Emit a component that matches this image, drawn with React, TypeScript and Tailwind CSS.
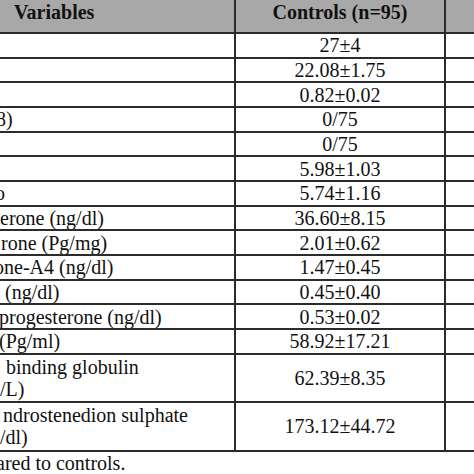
import React from "react";

type Row = { label?: string; cls?: string; v: string };

const rows: Row[] = [
  { v: "27±4" },
  { v: "22.08±1.75" },
  { v: "0.82±0.02" },
  { label: "8)", cls: "-ml-[4px]", v: "0/75" },
  { v: "0/75" },
  { v: "5.98±1.03" },
  { label: "o", cls: "-ml-[5px]", v: "5.74±1.16" },
  { label: "erone (ng/dl)", cls: "ml-0", v: "36.60±8.15" },
  { label: "rone (Pg/mg)", cls: "ml-[1px]", v: "2.01±0.62" },
  { label: "one-A4 (ng/dl)", cls: "-ml-[6px]", v: "1.47±0.45" },
  { label: "(ng/dl)", cls: "ml-[5px]", v: "0.45±0.40" },
  { label: "progesterone (ng/dl)", cls: "-ml-[1px]", v: "0.53±0.02" },
  { label: "(Pg/ml)", cls: "-ml-[1px]", v: "58.92±17.21" },
];

type Tall = { lines: { t: string; cls: string }[]; v: string };

const tall: Tall[] = [
  {
    lines: [
      { t: "binding globulin", cls: "ml-[6px]" },
      { t: "/L)", cls: "ml-0" },
    ],
    v: "62.39±8.35",
  },
  {
    lines: [
      { t: "ndrostenedion sulphate", cls: "ml-[3px]" },
      { t: "/dl)", cls: "ml-0" },
    ],
    v: "173.12±44.72",
  },
];

export default function App() {
  return (
    <div className="w-[474px] h-[474px] overflow-hidden bg-white text-[20px] text-[#111] font-['Liberation_Serif','Times_New_Roman',serif]">
      {/* header */}
      <div className="flex h-[34px] bg-[#a8a8a8] border-b-2 border-[#2b2b2b] font-bold leading-[24px]">
        <div className="w-[236px] shrink-0 border-r-2 border-[#2b2b2b] pl-[14px]">Variables</div>
        <div className="w-[210px] shrink-0 border-r-2 border-[#2b2b2b] text-center">Controls (n=95)</div>
        <div className="flex-1" />
      </div>
      {rows.map((r, i) => (
        <div key={i} className="flex h-[24.67px] border-b-2 border-[#2b2b2b] leading-[22px]">
          <div className="w-[236px] shrink-0 border-r-2 border-[#2b2b2b] flex items-center overflow-hidden whitespace-nowrap">
            {r.label ? <span className={r.cls}>{r.label}</span> : null}
          </div>
          <div className="w-[210px] shrink-0 border-r-2 border-[#2b2b2b] flex items-center justify-center">
            {r.v}
          </div>
          <div className="flex-1" />
        </div>
      ))}
      {tall.map((r, i) => (
        <div key={"t" + i} className="flex h-[48.5px] border-b-2 border-[#2b2b2b] leading-[22px]">
          <div className="w-[236px] shrink-0 border-r-2 border-[#2b2b2b] flex flex-col justify-center overflow-hidden whitespace-nowrap">
            {r.lines.map((l, j) => (
              <div key={j} className={l.cls}>
                {l.t}
              </div>
            ))}
          </div>
          <div className="w-[210px] shrink-0 border-r-2 border-[#2b2b2b] flex items-center justify-center">
            {r.v}
          </div>
          <div className="flex-1" />
        </div>
      ))}
      <div className="leading-[22px] whitespace-nowrap">
        <span className="-ml-[4px]">ared to controls.</span>
      </div>
    </div>
  );
}
